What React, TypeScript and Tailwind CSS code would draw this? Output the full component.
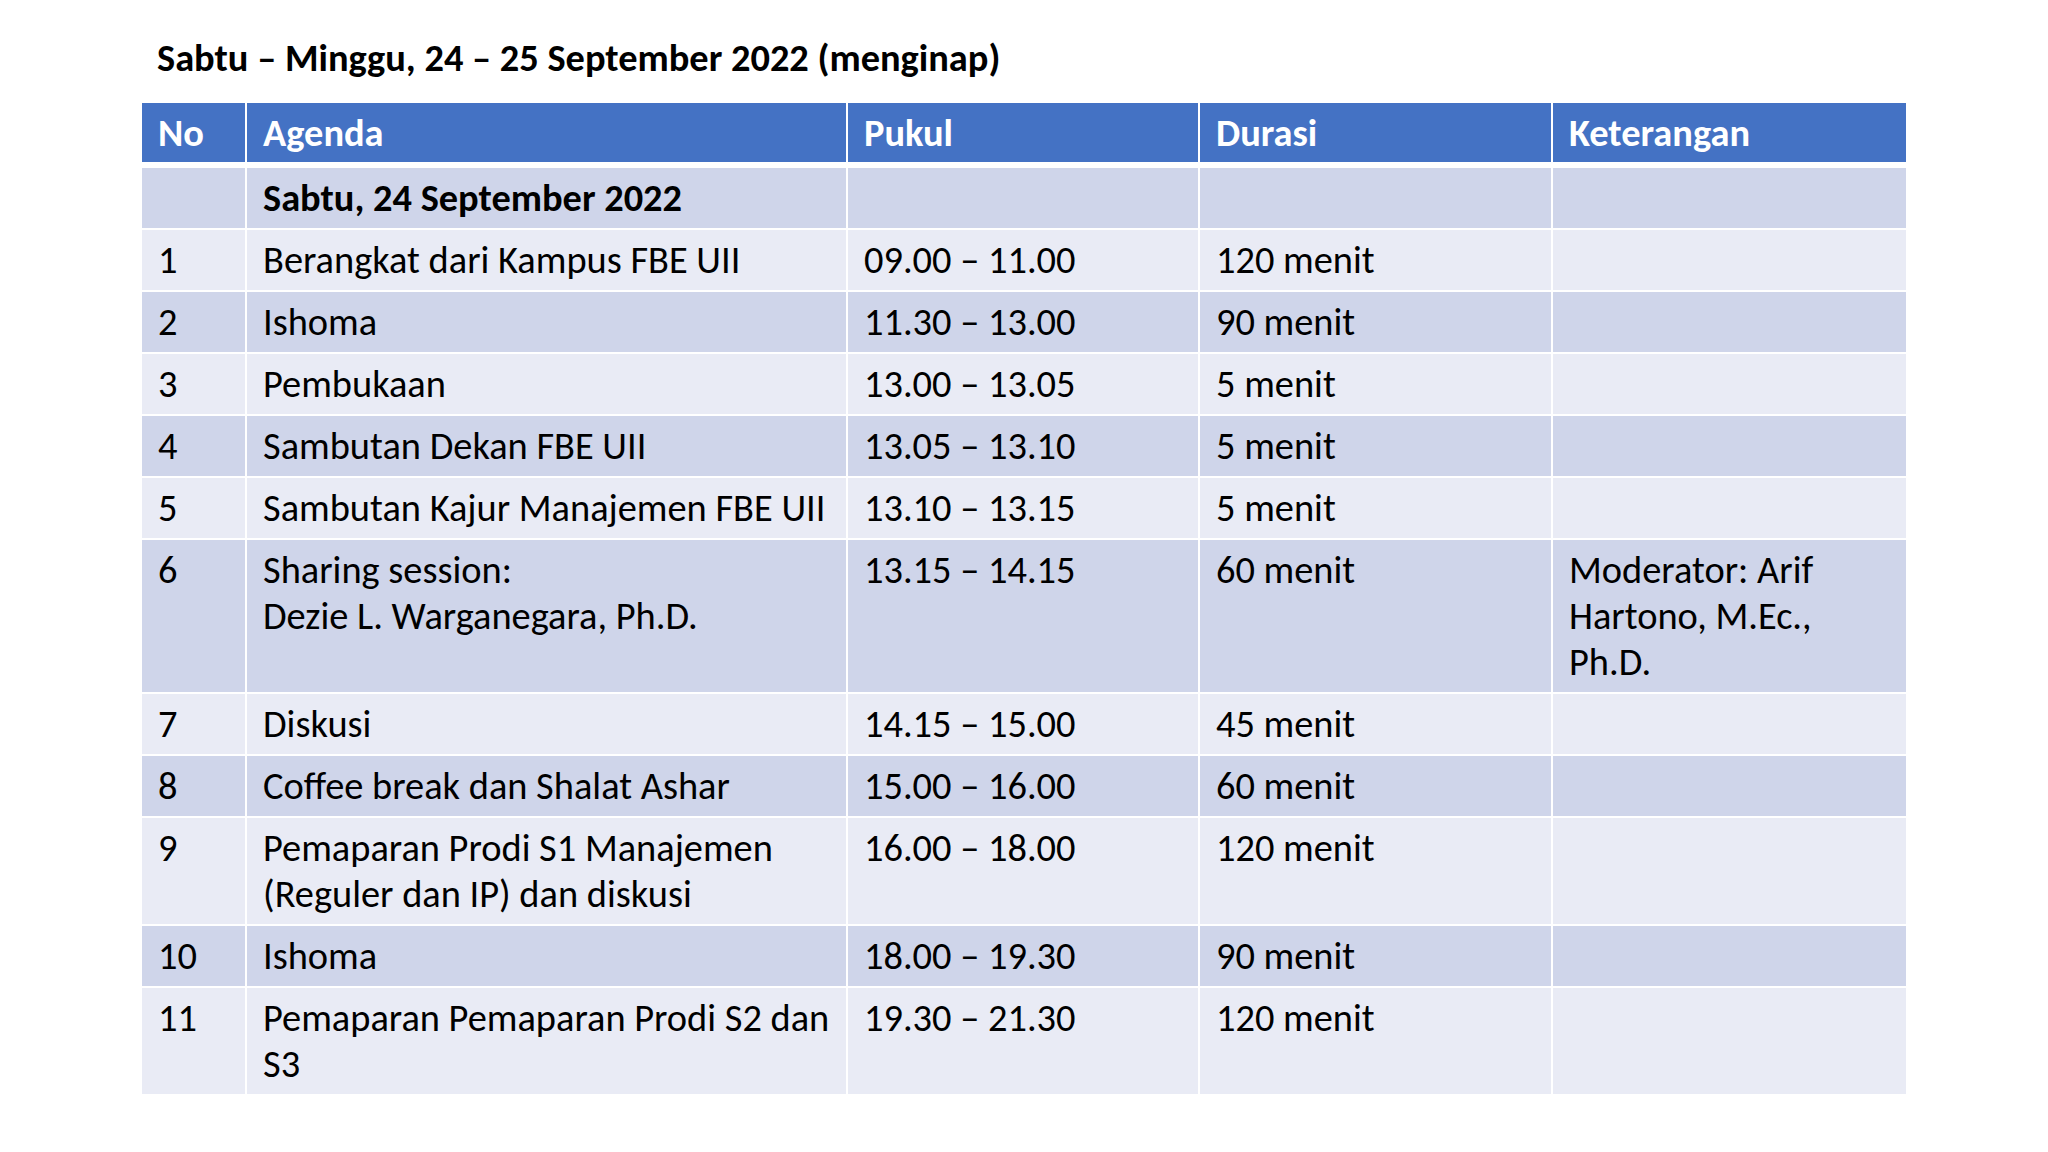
import React from 'react';

type Row = {
  no: string;
  agenda: React.ReactNode;
  pukul: string;
  durasi: string;
  ket?: React.ReactNode;
  bold?: boolean;
};

const rows: Row[] = [
  { no: '', agenda: 'Sabtu, 24 September 2022', pukul: '', durasi: '', bold: true },
  { no: '1', agenda: 'Berangkat dari Kampus FBE UII', pukul: '09.00 – 11.00', durasi: '120 menit' },
  { no: '2', agenda: 'Ishoma', pukul: '11.30 – 13.00', durasi: '90 menit' },
  { no: '3', agenda: 'Pembukaan', pukul: '13.00 – 13.05', durasi: '5 menit' },
  { no: '4', agenda: 'Sambutan Dekan FBE UII', pukul: '13.05 – 13.10', durasi: '5 menit' },
  { no: '5', agenda: 'Sambutan Kajur Manajemen FBE UII', pukul: '13.10 – 13.15', durasi: '5 menit' },
  {
    no: '6',
    agenda: (
      <>
        Sharing session:
        <br />
        Dezie L. Warganegara, Ph.D.
      </>
    ),
    pukul: '13.15 – 14.15',
    durasi: '60 menit',
    ket: (
      <>
        Moderator: Arif
        <br />
        Hartono, M.Ec.,
        <br />
        Ph.D.
      </>
    ),
  },
  { no: '7', agenda: 'Diskusi', pukul: '14.15 – 15.00', durasi: '45 menit' },
  { no: '8', agenda: 'Coffee break dan Shalat Ashar', pukul: '15.00 – 16.00', durasi: '60 menit' },
  {
    no: '9',
    agenda: (
      <>
        Pemaparan Prodi S1 Manajemen
        <br />
        (Reguler dan IP) dan diskusi
      </>
    ),
    pukul: '16.00 – 18.00',
    durasi: '120 menit',
  },
  { no: '10', agenda: 'Ishoma', pukul: '18.00 – 19.30', durasi: '90 menit' },
  {
    no: '11',
    agenda: (
      <>
        Pemaparan Pemaparan Prodi S2 dan
        <br />
        S3
      </>
    ),
    pukul: '19.30 – 21.30',
    durasi: '120 menit',
  },
];

const font = { fontFamily: 'Carlito, Calibri, Lato, "Liberation Sans", sans-serif' };

const th = 'border-b-[6px] border-r-2 border-white px-4 py-[6px] text-left align-middle font-bold leading-[47px] text-white';
const td = 'whitespace-nowrap border-b-2 border-r-2 border-white px-4 py-[7px] align-top leading-[46px]';

export default function App(): React.ReactElement {
  return (
    <div className="min-h-[1152px] w-[2048px] bg-white pl-[142px] pt-[35px] text-black" style={font}>
      <h1 className="ml-[15px] text-[38.4px] font-bold leading-[46px]">
        Sabtu – Minggu, 24 – 25 September 2022 (menginap)
      </h1>
      <table className="mt-[22px] w-[1766px] table-fixed border-separate border-spacing-0 text-[38.4px]">
        <colgroup>
          <col className="w-[105px]" />
          <col className="w-[601px]" />
          <col className="w-[352px]" />
          <col className="w-[353px]" />
          <col className="w-[355px]" />
        </colgroup>
        <thead>
          <tr className="bg-[#4472c4]">
            <th className={th}>No</th>
            <th className={th}>Agenda</th>
            <th className={th}>Pukul</th>
            <th className={th}>Durasi</th>
            <th className={`${th} border-r-0`}>Keterangan</th>
          </tr>
        </thead>
        <tbody>
          {rows.map((r, i) => (
            <tr key={i} className={i % 2 === 0 ? 'bg-[#cfd5ea]' : 'bg-[#e9ebf5]'}>
              <td className={td}>{r.no}</td>
              <td className={`${td} ${r.bold ? 'font-bold' : ''}`}>{r.agenda}</td>
              <td className={td}>{r.pukul}</td>
              <td className={td}>{r.durasi}</td>
              <td className={`${td} border-r-0`}>{r.ket}</td>
            </tr>
          ))}
        </tbody>
      </table>
    </div>
  );
}
